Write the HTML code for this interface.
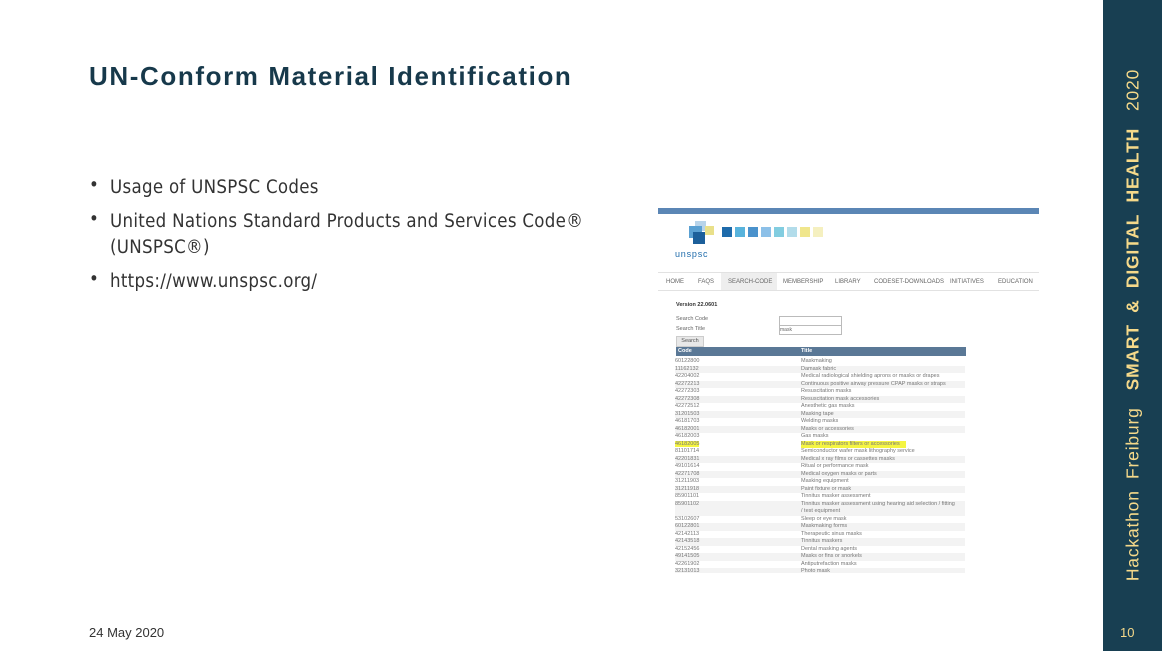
<!DOCTYPE html>
<html><head><meta charset="utf-8"><style>
body{margin:0;width:1162px;height:651px;position:relative;background:#fff;font-family:"Liberation Sans",sans-serif;overflow:hidden}
.a{position:absolute}
h1{position:absolute;left:89px;top:61px;margin:0;font-size:26px;color:#17394b;font-weight:bold;letter-spacing:1.6px}
.bul{position:absolute;left:89px;font-size:18.5px;color:#333;font-family:"DejaVu Sans Condensed","Liberation Sans",sans-serif;letter-spacing:0.3px}
.bul:before{content:"•";position:absolute;left:0}
.bul span{margin-left:21px;display:block;line-height:26px}
#side{position:absolute;left:1103px;top:0;width:59px;height:651px;background:#183f52}
#vt{position:absolute;left:1133px;top:325px;transform:translate(-50%,-50%) rotate(-90deg);white-space:nowrap;color:#f5d98a;font-size:17.5px;letter-spacing:0.8px}
#shot{position:absolute;left:658px;top:208px;width:381px;height:365px;overflow:hidden;background:#fff}
.nav{position:absolute;top:64px;left:0;width:381px;height:17px;border-top:1px solid #e2e2e2;border-bottom:1px solid #e2e2e2;font-size:6px;color:#666;font-family:"Liberation Sans Narrow","Liberation Sans",sans-serif}
.nav span{position:absolute;top:5px;line-height:8px;white-space:nowrap}
.t{position:absolute;font-size:5.5px;color:#666;line-height:7.5px}
.row{position:absolute;left:17px;width:290px;height:7.5px;font-size:5.5px;color:#777;line-height:7.5px}
.row b{font-weight:normal;position:absolute;left:126px}
</style></head><body>
<h1>UN-Conform Material Identification</h1>
<div class="bul" style="top:175px"><span>Usage of UNSPSC Codes</span></div>
<div class="bul" style="top:209px"><span>United Nations Standard Products and Services Code®<br>(UNSPSC®)</span></div>
<div class="bul" style="top:269px"><span>https://www.unspsc.org/</span></div>
<div class="a" style="left:89px;top:625px;font-size:13px;color:#333">24 May 2020</div>
<div id="side"></div>
<div id="vt">Hackathon&nbsp; Freiburg&nbsp;&nbsp; <b>SMART &nbsp;&amp;&nbsp; DIGITAL&nbsp; HEALTH</b>&nbsp;&nbsp; 2020</div>
<div class="a" style="left:1120px;top:625px;font-size:13px;color:#f5d98a">10</div>
<div id="shot">
<div class="a" style="left:0;top:0;width:381px;height:6px;background:#5b86b5"></div>
<div class="a" style="left:37px;top:13px;width:11px;height:10px;background:#b8d4ea"></div>
<div class="a" style="left:31px;top:18px;width:13px;height:12px;background:#5aa0d2"></div>
<div class="a" style="left:35px;top:24px;width:12px;height:12px;background:#1c5f9a"></div>
<div class="a" style="left:47px;top:18px;width:9px;height:9px;background:#e9e08a"></div>
<div class="a" style="left:64px;top:19px;width:10px;height:10px;background:#1e6bab"></div>
<div class="a" style="left:77px;top:19px;width:10px;height:10px;background:#58b3dc"></div>
<div class="a" style="left:90px;top:19px;width:10px;height:10px;background:#4a92cc"></div>
<div class="a" style="left:103px;top:19px;width:10px;height:10px;background:#8cc0e8"></div>
<div class="a" style="left:116px;top:19px;width:10px;height:10px;background:#82cde0"></div>
<div class="a" style="left:129px;top:19px;width:10px;height:10px;background:#b2dcea"></div>
<div class="a" style="left:142px;top:19px;width:10px;height:10px;background:#f0e68c"></div>
<div class="a" style="left:155px;top:19px;width:10px;height:10px;background:#f5f0c0"></div>
<div class="a" style="left:17px;top:41px;font-size:9px;color:#1e6bab;letter-spacing:0.8px">unspsc</div>
<div class="nav">
<div class="a" style="left:63px;top:0;width:56px;height:17px;background:#eee"></div>
<span style="left:8px">HOME</span><span style="left:40px">FAQS</span><span style="left:70px">SEARCH-CODE</span><span style="left:125px">MEMBERSHIP</span><span style="left:177px">LIBRARY</span><span style="left:216px">CODESET-DOWNLOADS</span><span style="left:292px">INITIATIVES</span><span style="left:340px">EDUCATION</span>
</div>
<div class="t" style="left:18px;top:94px;font-weight:bold;color:#333">Version 22.0601</div>
<div class="t" style="left:18px;top:108px">Search Code</div>
<div class="t" style="left:18px;top:118px">Search Title</div>
<div class="a" style="left:121px;top:108px;width:61px;height:8px;border:1px solid #bbb"></div>
<div class="a" style="left:121px;top:117px;width:61px;height:8px;border:1px solid #bbb;font-size:5px;color:#666;line-height:8px">mask</div>
<div class="a" style="left:18px;top:128px;width:26px;height:9px;background:#e8e8e8;border:1px solid #ccc;font-size:5.5px;color:#555;text-align:center;line-height:9px">Search</div>
<div class="a" style="left:18px;top:139px;width:290px;height:9px;background:#5a7896;color:#fff;font-size:5.5px;font-weight:bold;line-height:9px"><span style="margin-left:2px">Code</span><span style="position:absolute;left:125px">Title</span></div>
<div class="row" style="top:150px">60122800<b>Maskmaking</b></div>
<div class="row" style="top:157.5px;background:#f3f3f3">11162132<b>Damask fabric</b></div>
<div class="row" style="top:165px">42204002<b>Medical radiological shielding aprons or masks or drapes</b></div>
<div class="row" style="top:172.5px;background:#f3f3f3">42272213<b>Continuous positive airway pressure CPAP masks or straps</b></div>
<div class="row" style="top:180px">42272303<b>Resuscitation masks</b></div>
<div class="row" style="top:187.5px;background:#f3f3f3">42272308<b>Resuscitation mask accessories</b></div>
<div class="row" style="top:195px">42272512<b>Anesthetic gas masks</b></div>
<div class="row" style="top:202.5px;background:#f3f3f3">31201503<b>Masking tape</b></div>
<div class="row" style="top:210px">46181703<b>Welding masks</b></div>
<div class="row" style="top:217.5px;background:#f3f3f3">46182001<b>Masks or accessories</b></div>
<div class="row" style="top:225px">46182003<b>Gas masks</b></div>
<div class="row" style="top:232.5px"><span style="background:#f5f542">46182005</span><b style="background:#f5f542;padding-right:6px">Mask or respirators filters or accessories</b></div>
<div class="row" style="top:240px">81101714<b>Semiconductor wafer mask lithography service</b></div>
<div class="row" style="top:247.5px;background:#f3f3f3">42201831<b>Medical x ray films or cassettes masks</b></div>
<div class="row" style="top:255px">49101614<b>Ritual or performance mask</b></div>
<div class="row" style="top:262.5px;background:#f3f3f3">42271708<b>Medical oxygen masks or parts</b></div>
<div class="row" style="top:270px">31211903<b>Masking equipment</b></div>
<div class="row" style="top:277.5px;background:#f3f3f3">31211918<b>Paint fixture or mask</b></div>
<div class="row" style="top:285px">85901101<b>Tinnitus masker assessment</b></div>
<div class="row" style="top:292.5px;height:15px;background:#f3f3f3">85901102<b>Tinnitus masker assessment using hearing aid selection / fitting<br>/ test equipment</b></div>
<div class="row" style="top:307.5px">53102607<b>Sleep or eye mask</b></div>
<div class="row" style="top:315px;background:#f3f3f3">60122801<b>Maskmaking forms</b></div>
<div class="row" style="top:322.5px">42142113<b>Therapeutic sinus masks</b></div>
<div class="row" style="top:330px;background:#f3f3f3">42143518<b>Tinnitus maskers</b></div>
<div class="row" style="top:337.5px">42152456<b>Dental masking agents</b></div>
<div class="row" style="top:345px;background:#f3f3f3">49141505<b>Masks or fins or snorkels</b></div>
<div class="row" style="top:352.5px">42261902<b>Antiputrefaction masks</b></div>
<div class="row" style="top:360px;background:#f3f3f3">32131013<b>Photo mask</b></div>
</div>
</body></html>
